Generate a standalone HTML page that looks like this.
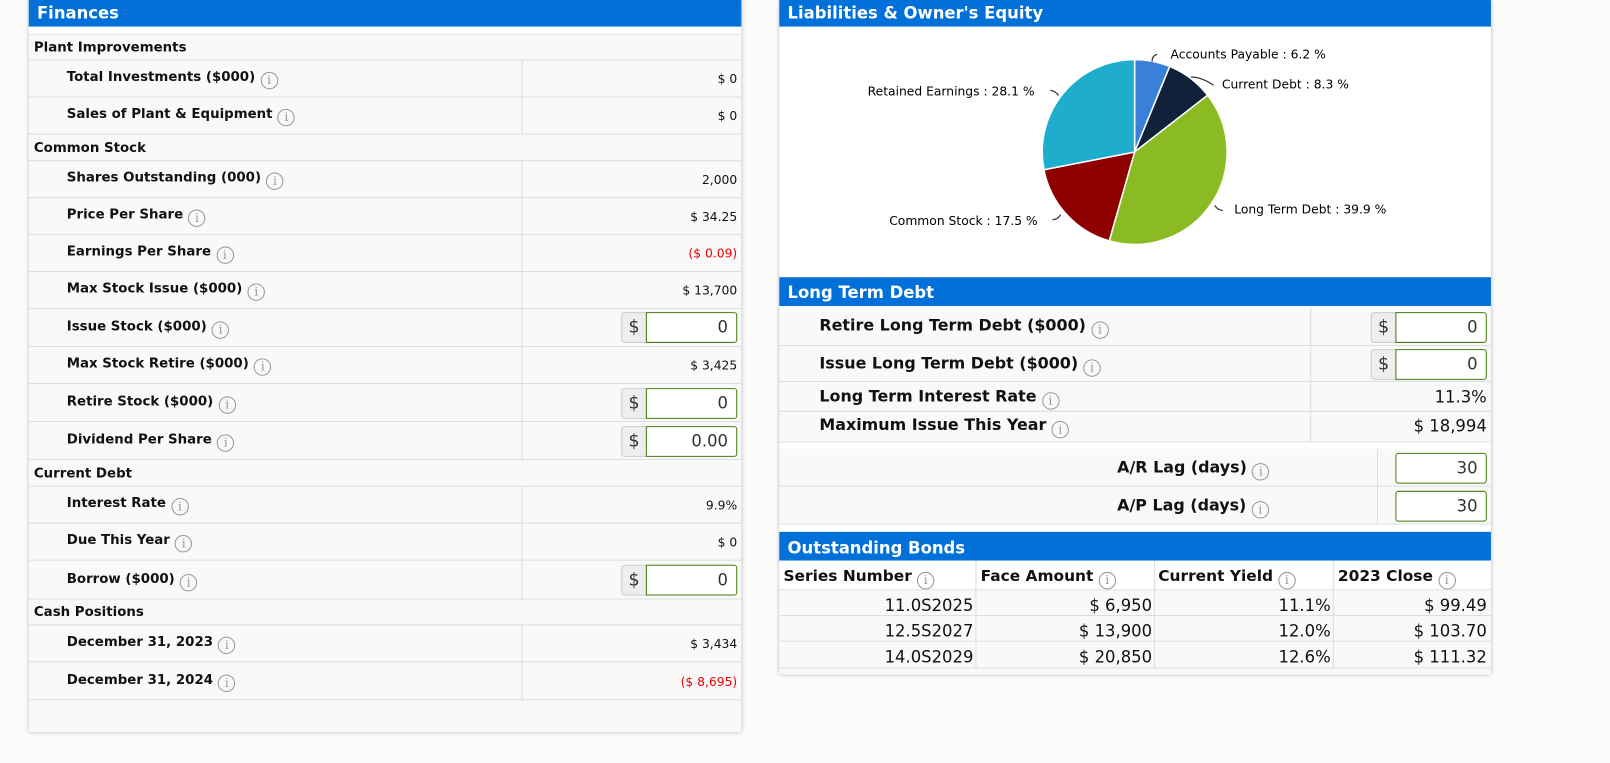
<!DOCTYPE html>
<html><head><meta charset="utf-8">
<style>
html,body{margin:0;padding:0;background:#fff;overflow:hidden;width:1610px;height:763px}
#w{position:absolute;left:0;top:0;width:1568px;height:743px;transform:scale(1.02679);transform-origin:0 0;background:#fff;font-family:"DejaVu Sans","Liberation Sans",sans-serif;color:#111}
.bg{position:absolute;left:0;top:0;width:1568px;height:743px;background:#fbfbfb}
.p{position:absolute;background:#f9f9f9;box-shadow:0 0 4px rgba(0,0,0,.35)}
.h{position:absolute;background:#0170d8;color:#fff;font-weight:bold;font-size:16px;line-height:26px;padding-left:8px;box-sizing:border-box}
.r{position:absolute;border-bottom:1px solid #ddd;box-sizing:border-box}
.s{background:#f9f9f9}
.l{position:absolute;font-weight:bold;font-size:13px;white-space:nowrap}
.v{position:absolute;font-size:12px;text-align:right;white-space:nowrap}
.i{display:inline-block;width:17px;height:17px;border:1.5px solid #999;border-radius:50%;box-sizing:border-box;color:#999;font-size:12px;line-height:14px;text-align:center;font-weight:normal;vertical-align:-3px;margin-left:5px;font-family:"DejaVu Serif",serif}
.in{position:absolute;height:30px;box-sizing:border-box}
.in .d{position:absolute;left:0;top:0;width:25px;height:30px;background:#eee;border:1px solid #ccc;border-radius:3px 0 0 3px;box-sizing:border-box;font-size:17px;line-height:28px;text-align:center;color:#333}
.in .f{position:absolute;left:24px;right:0;top:0;height:30px;background:#fff;border:1px solid #4a7a10;border-radius:0 3px 3px 0;box-sizing:border-box;font-size:16px;line-height:28px;text-align:right;padding-right:8px;color:#333}
.red{color:#e00}
.vl{position:absolute;top:34px;width:1px;background:#ddd}
</style></head><body><div id="w">
<div class="bg"></div>

<!-- LEFT PANEL -->
<div class="p" style="left:28px;top:0;width:694px;height:713px"></div>
<div class="h" style="left:28px;top:0;width:694px;height:26px">Finances</div>
<div style="position:absolute;left:28px;top:26px;width:694px;height:8px;background:#fff"></div>
<div class="vl" style="left:508px;height:647px"></div>

<div class="r" style="left:28px;top:33px;width:694px;height:1px"></div>
<div class="r s" style="left:28px;top:34px;width:694px;height:25px"></div><div class="l" style="left:33px;top:39px">Plant Improvements</div>
<div class="r" style="left:28px;top:59px;width:694px;height:36px"></div><div class="l" style="left:65px;top:68px">Total Investments ($000)<span class="i">i</span></div><div class="v" style="right:850px;top:70px">$ 0</div>
<div class="r" style="left:28px;top:95px;width:694px;height:36px"></div><div class="l" style="left:65px;top:104px">Sales of Plant &amp; Equipment<span class="i">i</span></div><div class="v" style="right:850px;top:106px">$ 0</div>
<div class="r s" style="left:28px;top:131px;width:694px;height:26px"></div><div class="l" style="left:33px;top:137px">Common Stock</div>
<div class="r" style="left:28px;top:157px;width:694px;height:36px"></div><div class="l" style="left:65px;top:166px">Shares Outstanding (000)<span class="i">i</span></div><div class="v" style="right:850px;top:168px">2,000</div>
<div class="r" style="left:28px;top:193px;width:694px;height:36px"></div><div class="l" style="left:65px;top:202px">Price Per Share<span class="i">i</span></div><div class="v" style="right:850px;top:204px">$ 34.25</div>
<div class="r" style="left:28px;top:229px;width:694px;height:36px"></div><div class="l" style="left:65px;top:238px">Earnings Per Share<span class="i">i</span></div><div class="v red" style="right:850px;top:240px">($ 0.09)</div>
<div class="r" style="left:28px;top:265px;width:694px;height:36px"></div><div class="l" style="left:65px;top:274px">Max Stock Issue ($000)<span class="i">i</span></div><div class="v" style="right:850px;top:276px">$ 13,700</div>
<div class="r" style="left:28px;top:301px;width:694px;height:37px"></div><div class="l" style="left:65px;top:311px">Issue Stock ($000)<span class="i">i</span></div><div class="in" style="left:605px;top:304px;width:113px"><div class="d">$</div><div class="f">0</div></div>
<div class="r" style="left:28px;top:338px;width:694px;height:36px"></div><div class="l" style="left:65px;top:347px">Max Stock Retire ($000)<span class="i">i</span></div><div class="v" style="right:850px;top:349px">$ 3,425</div>
<div class="r" style="left:28px;top:374px;width:694px;height:37px"></div><div class="l" style="left:65px;top:384px">Retire Stock ($000)<span class="i">i</span></div><div class="in" style="left:605px;top:378px;width:113px"><div class="d">$</div><div class="f">0</div></div>
<div class="r" style="left:28px;top:411px;width:694px;height:37px"></div><div class="l" style="left:65px;top:421px">Dividend Per Share<span class="i">i</span></div><div class="in" style="left:605px;top:415px;width:113px"><div class="d">$</div><div class="f">0.00</div></div>
<div class="r s" style="left:28px;top:448px;width:694px;height:26px"></div><div class="l" style="left:33px;top:454px">Current Debt</div>
<div class="r" style="left:28px;top:474px;width:694px;height:36px"></div><div class="l" style="left:65px;top:483px">Interest Rate<span class="i">i</span></div><div class="v" style="right:850px;top:485px">9.9%</div>
<div class="r" style="left:28px;top:510px;width:694px;height:36px"></div><div class="l" style="left:65px;top:519px">Due This Year<span class="i">i</span></div><div class="v" style="right:850px;top:521px">$ 0</div>
<div class="r" style="left:28px;top:546px;width:694px;height:38px"></div><div class="l" style="left:65px;top:557px">Borrow ($000)<span class="i">i</span></div><div class="in" style="left:605px;top:550px;width:113px"><div class="d">$</div><div class="f">0</div></div>
<div class="r s" style="left:28px;top:584px;width:694px;height:25px"></div><div class="l" style="left:33px;top:589px">Cash Positions</div>
<div class="r" style="left:28px;top:609px;width:694px;height:36px"></div><div class="l" style="left:65px;top:618px">December 31, 2023<span class="i">i</span></div><div class="v" style="right:850px;top:620px">$ 3,434</div>
<div class="r" style="left:28px;top:645px;width:694px;height:37px"></div><div class="l" style="left:65px;top:655px">December 31, 2024<span class="i">i</span></div><div class="v red" style="right:850px;top:657px">($ 8,695)</div>

<!-- RIGHT PANEL -->
<div class="p" style="left:759px;top:0;width:693px;height:657px"></div>
<div class="h" style="left:759px;top:0;width:693px;height:26px">Liabilities &amp; Owner's Equity</div>
<div style="position:absolute;left:759px;top:26px;width:693px;height:243px;background:#fff"></div>
<svg style="position:absolute;left:0;top:0" width="1568" height="270" font-family="DejaVu Sans,sans-serif" font-size="12">
<g stroke="#fff" stroke-width="1.5">
<path d="M1105 148 L1105 58 A90 90 0 0 1 1139.2 64.7 Z" fill="#3a80d8"/>
<path d="M1105 148 L1139.2 64.7 A90 90 0 0 1 1176.1 92.8 Z" fill="#10223a"/>
<path d="M1105 148 L1176.1 92.8 A90 90 0 0 1 1080.3 234.6 Z" fill="#8bbb22"/>
<path d="M1105 148 L1080.3 234.6 A90 90 0 0 1 1016.7 165.3 Z" fill="#8e0000"/>
<path d="M1105 148 L1016.7 165.3 A90 90 0 0 1 1105 58 Z" fill="#1eadcd"/>
</g>
<g fill="none" stroke="#333" stroke-width="1.2">
<path d="M1122 60 q0-6 5-7"/><path d="M1160 75 q10 0 22 8"/>
<path d="M1023 88 q4 0 8 5"/><path d="M1025 214 q5 0 8-5"/><path d="M1183 200 q3 5 8 5"/>
</g>
<g fill="#000">
<text x="1140" y="57">Accounts Payable : 6.2 %</text>
<text x="1190" y="86">Current Debt : 8.3 %</text>
<text x="845" y="93">Retained Earnings : 28.1 %</text>
<text x="866" y="219">Common Stock : 17.5 %</text>
<text x="1202" y="208">Long Term Debt : 39.9 %</text>
</g>
</svg>

<div class="h" style="left:759px;top:270px;width:693px;height:28px;line-height:30px">Long Term Debt</div>
<div style="position:absolute;left:1276px;top:300px;width:1px;height:130px;background:#ddd"></div>
<div class="r" style="left:759px;top:299px;width:693px;height:38px"></div><div class="l" style="left:798px;top:308px;font-size:15.5px">Retire Long Term Debt ($000)<span class="i">i</span></div><div class="in" style="left:1335px;top:304px;width:113px"><div class="d">$</div><div class="f">0</div></div>
<div class="r" style="left:759px;top:337px;width:693px;height:35px"></div><div class="l" style="left:798px;top:345px;font-size:15.5px">Issue Long Term Debt ($000)<span class="i">i</span></div><div class="in" style="left:1335px;top:340px;width:113px"><div class="d">$</div><div class="f">0</div></div>
<div class="r" style="left:759px;top:372px;width:693px;height:29px"></div><div class="l" style="left:798px;top:377px;font-size:15.5px">Long Term Interest Rate<span class="i">i</span></div><div class="v" style="right:120px;top:377px;font-size:16px">11.3%</div>
<div class="r" style="left:759px;top:401px;width:693px;height:30px"></div><div class="l" style="left:798px;top:405px;font-size:15.5px">Maximum Issue This Year<span class="i">i</span></div><div class="v" style="right:120px;top:405px;font-size:16px">$ 18,994</div>
<div style="position:absolute;left:759px;top:431px;width:693px;height:6px;background:#fff"></div>
<div style="position:absolute;left:1341px;top:437px;width:1px;height:75px;background:#ddd"></div>
<div class="r" style="left:759px;top:437px;width:693px;height:37px"></div><div class="l" style="left:1088px;top:446px;font-size:15.5px">A/R Lag (days)<span class="i">i</span></div><div class="in" style="left:1359px;top:441px;width:89px"><div class="f" style="left:0;border-radius:3px">30</div></div>
<div class="r" style="left:759px;top:474px;width:693px;height:37px"></div><div class="l" style="left:1088px;top:483px;font-size:15.5px">A/P Lag (days)<span class="i">i</span></div><div class="in" style="left:1359px;top:478px;width:89px"><div class="f" style="left:0;border-radius:3px">30</div></div>
<div style="position:absolute;left:759px;top:511px;width:693px;height:7px;background:#fff"></div>
<div class="h" style="left:759px;top:518px;width:693px;height:28px;line-height:32px;font-size:16px">Outstanding Bonds</div>
<div style="position:absolute;left:759px;top:546px;width:693px;height:105px;background:#fff"></div>
<div class="r" style="left:759px;top:546px;width:693px;height:29px"></div>
<div class="r" style="left:759px;top:575px;width:693px;height:25px;background:#f9f9f9"></div>
<div class="r" style="left:759px;top:600px;width:693px;height:25px;background:#f9f9f9"></div>
<div class="r" style="left:759px;top:625px;width:693px;height:26px;background:#f9f9f9"></div>
<div style="position:absolute;left:950px;top:546px;width:1px;height:105px;background:#ddd"></div>
<div style="position:absolute;left:1124px;top:546px;width:1px;height:105px;background:#ddd"></div>
<div style="position:absolute;left:1298px;top:546px;width:1px;height:105px;background:#ddd"></div>
<div class="l" style="left:763px;top:552px;font-size:15px">Series Number<span class="i">i</span></div>
<div class="l" style="left:955px;top:552px;font-size:15px">Face Amount<span class="i">i</span></div>
<div class="l" style="left:1128px;top:552px;font-size:15px">Current Yield<span class="i">i</span></div>
<div class="l" style="left:1303px;top:552px;font-size:15px">2023 Close<span class="i">i</span></div>
<div class="v" style="right:620px;top:577px;font-size:16px;line-height:25px">11.0S2025<br>12.5S2027<br>14.0S2029</div>
<div class="v" style="right:446px;top:577px;font-size:16px;line-height:25px">$ 6,950<br>$ 13,900<br>$ 20,850</div>
<div class="v" style="right:272px;top:577px;font-size:16px;line-height:25px">11.1%<br>12.0%<br>12.6%</div>
<div class="v" style="right:120px;top:577px;font-size:16px;line-height:25px">$ 99.49<br>$ 103.70<br>$ 111.32</div>
</div></body></html>
